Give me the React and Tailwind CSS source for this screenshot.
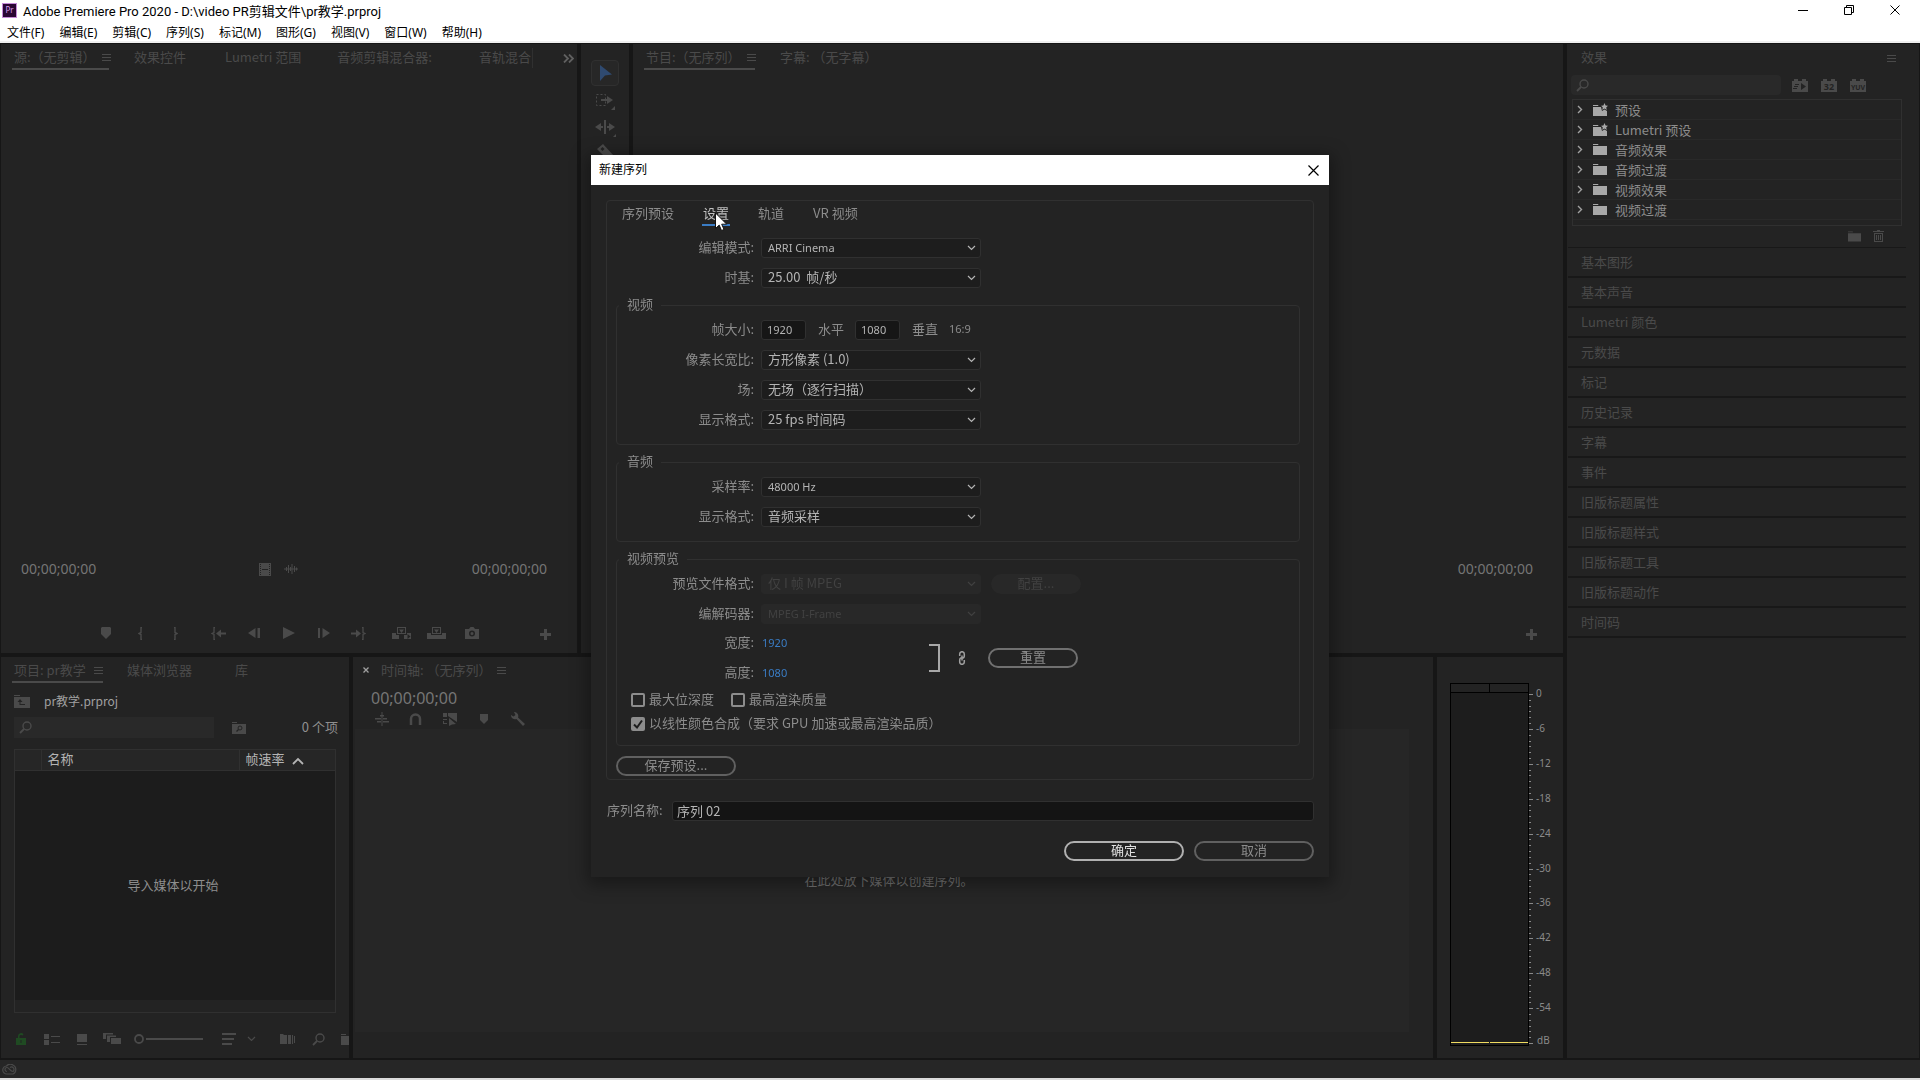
import React from "react";

const uiFont = 'font-["Noto_Sans_CJK_SC",sans-serif]';
const latinFont = 'font-["Noto_Sans","Noto_Sans_CJK_SC",sans-serif]';

function Icon({ w, h, label, className = "", children }) {
  return (
    <svg
      width={w}
      height={h}
      viewBox={`0 0 ${w} ${h}`}
      fill="currentColor"
      role={label ? "img" : undefined}
      aria-label={label}
      aria-hidden={label ? undefined : true}
      className={`shrink-0 ${className}`}
    >
      {children}
    </svg>
  );
}

const MenuLines = () => (
  <Icon w={9} h={9}>
    <path d="M0 1h9v1H0zM0 4h9v1H0zM0 7h9v1H0z" />
  </Icon>
);

const ChevronDown = () => (
  <Icon w={9} h={6}>
    <path d="M1 1l3.5 3.5L8 1" fill="none" stroke="currentColor" strokeWidth="1.2" />
  </Icon>
);

const Search = () => (
  <Icon w={13} h={13}>
    <circle cx="8" cy="5" r="4" fill="none" stroke="currentColor" strokeWidth="1.4" />
    <path d="M5 8L1 12" stroke="currentColor" strokeWidth="1.8" />
  </Icon>
);

const Plus = () => (
  <Icon w={11} h={11}>
    <path d="M4 0h3v4h4v3H7v4H4V7H0V4h4z" />
  </Icon>
);

const Marker = () => (
  <Icon w={10} h={12}>
    <path d="M1 0h8l1 1v6l-5 5-5-5V1z" />
  </Icon>
);

const MarkerSmall = () => (
  <Icon w={8} h={10}>
    <path d="M0 0h8v6l-4 4-4-4z" />
  </Icon>
);

const BraceOpen = () => (
  <Icon w={5} h={13}>
    <path d="M4 .5H3v5L1 6.500l2 1v5h1" fill="none" stroke="currentColor" strokeWidth="1.4" />
  </Icon>
);

const BraceClose = () => (
  <Icon w={5} h={13}>
    <path d="M1 .5h1v5l2 1-2 1v5H1" fill="none" stroke="currentColor" strokeWidth="1.4" />
  </Icon>
);

const GoIn = () => (
  <Icon w={15} h={13}>
    <path d="M4 .5H3v5L1 6.500l2 1v5h1" fill="none" stroke="currentColor" strokeWidth="1.3" />
    <path d="M5 6.500L10 2.500v3h5v2h-5v3z" />
  </Icon>
);

const GoOut = () => (
  <Icon w={15} h={13}>
    <path d="M11 .5h1v5l2 1-2 1v5h-1" fill="none" stroke="currentColor" strokeWidth="1.3" />
    <path d="M10 6.500L5 2.500v3H0v2h5v3z" />
  </Icon>
);

const StepBack = () => (
  <Icon w={12} h={10}>
    <path d="M0 5l7.500-5v10zM9.500 0H12v10H9.500z" />
  </Icon>
);

const StepForward = () => (
  <Icon w={12} h={10}>
    <path d="M12 5L4.500 0v10zM0 0h2v10H0z" />
  </Icon>
);

const Play = () => (
  <Icon w={12} h={12}>
    <path d="M0 0l12 6-12 6z" />
  </Icon>
);

const Insert = () => (
  <Icon w={20} h={13}>
    <path fillRule="evenodd" d="M5 0h9v7H5zM6 1v5h7V1z" />
    <path d="M7 2.500h5L9.500 6zM0 6h4v2h3v4H0zM12 8h3V6h4v6h-7z" />
    <path d="M15.500 7l3 2.500-3 2.500z" fill="#232323" />
  </Icon>
);

const Overwrite = () => (
  <Icon w={20} h={13}>
    <path fillRule="evenodd" d="M5 0h9v7H5zM6 1v5h7V1z" />
    <path d="M7 2.500h5L9.500 6zM0 6h4v2h11V6h4v6H0z" />
  </Icon>
);

const Camera = () => (
  <Icon w={14} h={12}>
    <path fillRule="evenodd" d="M0 2h4l1.500-2h3L10 2h4v10H0zM7 3.500a3 3 0 100 6 3 3 0 000-6zM7 5a1.500 1.500 0 110 3 1.500 1.500 0 010-3z" />
  </Icon>
);

const Folder = ({ w = 14 }) => (
  <svg width={w} height="11" viewBox="0 0 14 11" fill="currentColor" aria-hidden="true" className="shrink-0">
    <path d="M0 0h5l.5 1H0zM0 2h14v9H0z" />
  </svg>
);

const PresetFolder = () => (
  <Icon w={15} h={13}>
    <path d="M0 2h5l.5 1H0zM0 4h8l1 4 2.500-1.500L14 8v5H0z" />
    <path d="M11.500 0l1.100 2.500 2.400.2-1.800 1.700.6 2.600-2.300-1.400L9.200 7l.6-2.600L8 2.700l2.400-.2z" />
  </Icon>
);

const IconButton = ({ label, className = "", children }) => (
  <button type="button" aria-label={label} className={`flex shrink-0 items-center justify-center ${className}`}>
    {children}
  </button>
);

function PanelTab({ active, className = "", children }) {
  return (
    <button
      type="button"
      role="tab"
      aria-selected={!!active}
      className={`flex h-[22px] shrink-0 items-center whitespace-nowrap border-b-2 pb-0.5 pl-[2px] ${active ? "border-[#4a4a4a]" : "border-transparent"} ${className}`}
    >
      <span>{children}</span>
      {active && (
        <span className="ml-auto pl-1.5">
          <MenuLines />
        </span>
      )}
    </button>
  );
}

const transport = [
  [["标记", Marker], ["标记入点", BraceOpen], ["标记出点", BraceClose]],
  [["转到入点", GoIn], ["后退一帧", StepBack], ["播放", Play], ["前进一帧", StepForward], ["转到出点", GoOut]],
  [["插入", Insert], ["覆盖", Overwrite], ["导出帧", Camera]],
];

function Timecode() {
  return <span className={`${latinFont} text-[14px] text-[#757575]`}>00;00;00;00</span>;
}

function SourcePanel() {
  return (
    <section className="flex min-w-0 flex-[576] flex-col bg-[#232323]">
      <div className="flex h-[26px] items-end overflow-hidden pl-[11px]" role="tablist">
        <PanelTab active className="w-[97px]">源:（无剪辑）</PanelTab>
        <PanelTab className="ml-[23px]">效果控件</PanelTab>
        <PanelTab className="ml-[37px]">Lumetri 范围</PanelTab>
        <PanelTab className="ml-[34px]">音频剪辑混合器:</PanelTab>
        <PanelTab className="ml-[45px]">音轨混合</PanelTab>
        <span className="mb-0.5 ml-px h-5 border-l border-[#303030]" />
        <IconButton label="更多" className="ml-auto mr-[3px] h-[22px] pb-0.5 text-[#606060]">
          <Icon w={11} h={9}>
            <path d="M1 .5l4 4-4 4M6 .5l4 4-4 4" fill="none" stroke="currentColor" strokeWidth="1.800" />
          </Icon>
        </IconButton>
      </div>
      <div className="mt-auto flex h-5 items-center pl-5 pr-[30px]">
        <div className="flex-1"><Timecode /></div>
        <span className="mr-3 flex items-center gap-[13px]">
          <Icon w={12} h={13}>
            <path fillRule="evenodd" d="M0 0h12v13H0zM1 1v1h1V1zM1 3v1h1V3zM1 5v1h1V5zM1 7v1h1V7zM1 9v1h1V9zM1 11v1h1v-1zM10 1v1h1V1zM10 3v1h1V3zM10 5v1h1V5zM10 7v1h1V7zM10 9v1h1V9zM10 11v1h1v-1zM3 6v1h6V6z" />
          </Icon>
          <Icon w={14} h={10}>
            <path d="M0 4.500h14v1H0zM2 3h1v4H2zM4 1h1v8H4zM6 3h1v4H6zM7.500 0h1v10h-1zM10 2h1v6h-1zM12 3.500h1v3h-1z" />
          </Icon>
        </span>
        <div className="flex-1 text-right"><Timecode /></div>
      </div>
      <div className="mb-2.5 mt-[44px] flex h-5 items-center pl-[87px] pr-[26px]">
        {transport.map((group, i) => (
          <div key={i} className="mr-2 flex">
            {group.map(([label, Glyph]) => (
              <IconButton key={label} label={label} className="h-5 w-[35px]">
                <Glyph />
              </IconButton>
            ))}
          </div>
        ))}
        <IconButton label="按钮编辑器" className="ml-auto mt-[3px]">
          <Plus />
        </IconButton>
      </div>
    </section>
  );
}

function ToolPanel() {
  const corner = <path d="M22 17v4h-4z" />;
  return (
    <section className="flex w-12 shrink-0 flex-col items-center bg-[#232323] pt-4">
      <IconButton label="选择工具" className="h-[26px] w-7 rounded-sm border border-[#303030] bg-[#272727] text-[#2f4a70]">
        <Icon w={12} h={16} className="ml-0.5">
          <path d="M0 0l12 9.500-7 1L0 16z" />
        </Icon>
      </IconButton>
      <IconButton label="向前选择轨道工具" className="h-[27px] w-7">
        <Icon w={24} h={22}>
          <path d="M3.500 5.500h9v11h-9z" fill="none" stroke="currentColor" strokeDasharray="2 2" />
          <path d="M8 10h6V7l6 4-6 4v-3H8z" />
          {corner}
        </Icon>
      </IconButton>
      <IconButton label="波纹编辑工具" className="h-[27px] w-7">
        <Icon w={24} h={22}>
          <path d="M11 4h2v14h-2zM2 11l6-4v3h2v2H8v3zM22 11l-6-4v3h-2v2h2v3z" />
          <path d="M23 18v3h-3z" />
        </Icon>
      </IconButton>
      <IconButton label="剃刀工具" className="h-[27px] w-7">
        <Icon w={24} h={22}>
          <path fillRule="evenodd" d="M4 6l6-5 11 12-5 5zM9.500 4L7.500 6l2 2 2-2z" />
        </Icon>
      </IconButton>
    </section>
  );
}

function ProgramPanel() {
  return (
    <section className="flex min-w-0 flex-[930] flex-col bg-[#232323]">
      <div className="flex h-[26px] items-end pl-[11px]" role="tablist">
        <PanelTab active className="w-[111px]">节目:（无序列）</PanelTab>
        <PanelTab className="ml-[23px]">字幕: （无字幕）</PanelTab>
      </div>
      <div className="mt-auto flex h-5 items-center justify-end pr-[30px]">
        <Timecode />
      </div>
      <div className="mb-2.5 mt-[44px] flex h-5 items-center justify-end pr-[26px]">
        <IconButton label="按钮编辑器" className="mt-[3px]">
          <Plus />
        </IconButton>
      </div>
    </section>
  );
}

function ProjectPanel() {
  return (
    <section className="flex min-w-0 flex-[348] flex-col overflow-hidden bg-[#232323]">
      <div className="flex h-[26px] shrink-0 items-end overflow-hidden pl-[11px]" role="tablist">
        <PanelTab active className="w-[91px]">项目: pr教学</PanelTab>
        <PanelTab className="ml-[22px]">媒体浏览器</PanelTab>
        <PanelTab className="ml-[41px]">库</PanelTab>
      </div>
      <div className="mt-2 flex h-5 shrink-0 items-center pl-[13px]">
        <Icon w={16} h={13}>
          <path fillRule="evenodd" d="M0 0h6v1H0zM0 2h16v11H0zM6 4L3.500 7H5.500v3H11V9H6.500V7H8.500z" />
        </Icon>
        <span className="ml-3.5 text-[12px] text-[#a0a0a0]">pr教学.prproj</span>
      </div>
      <div className="mt-1.5 flex h-[21px] shrink-0 items-center pl-[13px] pr-[11px]">
        <label className="flex h-full w-[200px] items-center bg-[#292929] pl-[5px]">
          <Search />
          <input aria-label="搜索项目" className="ml-1 w-full bg-transparent outline-none" />
        </label>
        <IconButton label="搜索素材箱" className="ml-[18px]">
          <Icon w={14} h={12}>
            <path d="M0 0h5v1H0zM0 2h14v10H0z" />
            <circle cx="8" cy="6" r="2" fill="none" stroke="#232323" />
            <path d="M6.500 7.500L4.500 9.500" stroke="#232323" strokeWidth="1.300" />
          </Icon>
        </IconButton>
        <span className="ml-auto whitespace-nowrap pb-0.5 text-[#909090]">0 个项</span>
      </div>
      <div className="ml-[13px] mr-[13px] mt-[11px] flex min-h-0 flex-1 flex-col border border-[#303030] bg-[#1c1c1c]">
        <table className="w-full shrink-0 table-fixed border-collapse bg-[#262626] text-left text-[#b4b4b4]">
          <thead>
            <tr className="h-5 border-b border-[#303030]">
              <th className="w-[26px] p-0" aria-label="标签" />
              <th className="border-l border-[#303030] p-0 pb-0.5 pl-1.5 font-normal leading-none">名称</th>
              <th className="w-24 border-l border-[#303030] p-0 pb-0.5 pl-1.5 font-normal leading-none">
                <span className="flex items-center gap-[7px]">
                  帧速率
                  <Icon w={12} h={8} className="mt-1">
                    <path d="M1 7l5-5 5 5" fill="none" stroke="currentColor" strokeWidth="1.800" />
                  </Icon>
                </span>
              </th>
            </tr>
          </thead>
        </table>
        <div className="flex flex-1 items-center justify-center pr-1 text-[#8e8e8e]">导入媒体以开始</div>
        <div className="h-3 bg-[#232323]" />
      </div>
      <div className="flex h-[45px] shrink-0 items-center overflow-hidden pl-[15px] pt-[7px]">
        <Icon w={10} h={12} label="可写" className="text-[#1f4a22]">
          <path fillRule="evenodd" d="M2 5V3a3 3 0 015.500-1.500L6.500 2.500A1.800 1.800 0 003.500 3v2H10v7H0V5zM4.500 7v3h1V7z" />
        </Icon>
        <IconButton label="列表视图" className="ml-[18px]">
          <Icon w={16} h={11}>
            <path d="M0 0h5v5H0zM0 6h5v5H0zM7 2h9v1H7zM7 8h9v1H7z" />
          </Icon>
        </IconButton>
        <IconButton label="图标视图" className="ml-[17px]">
          <Icon w={10} h={11}>
            <path d="M0 0h10v8H0zM0 10h10v1H0z" />
          </Icon>
        </IconButton>
        <IconButton label="自由变换视图" className="ml-4">
          <Icon w={18} h={12}>
            <path d="M0 0h10v1.500H3V6H0zM4 2.500h9V4H7v5H4zM8 5h10v6H8z" />
          </Icon>
        </IconButton>
        <span className="ml-[13px] flex items-center">
          <Icon w={69} h={10}>
            <circle cx="5" cy="5" r="4" fill="none" stroke="currentColor" strokeWidth="1.800" />
            <path d="M12 4h57v2H12z" />
          </Icon>
        </span>
        <IconButton label="排序图标" className="ml-[19px]">
          <Icon w={14} h={12}>
            <path d="M0 0h14v2H0zM0 5h12v2H0zM0 10h10v2H0z" />
          </Icon>
          <span className="ml-[11px]"><ChevronDown /></span>
        </IconButton>
        <IconButton label="自动匹配序列" className="ml-6">
          <Icon w={15} h={10}>
            <path d="M0 0h3l1 1h3v9H0zM8 1h3v9H8zM12 1h1v9h-1zM14 2h1v7h-1z" />
          </Icon>
        </IconButton>
        <IconButton label="查找" className="ml-[17px]">
          <Search />
        </IconButton>
        <IconButton label="新建素材箱" className="ml-4">
          <Icon w={12} h={11}>
            <path d="M0 0h5v1H0zM0 2h12v9H0z" />
          </Icon>
        </IconButton>
      </div>
    </section>
  );
}

function TimelinePanel() {
  return (
    <section className="flex min-w-0 flex-[1080] flex-col bg-[#232323]">
      <div className="flex h-[26px] shrink-0 items-end pl-2.5">
        <div className="flex h-[22px] items-center pb-1">
          <button type="button" aria-label="关闭时间轴" className="text-[#a0a0a0]">
            <Icon w={6} h={6}>
              <path d="M.5.5l5 5M5.500.5l-5 5" stroke="currentColor" strokeWidth="1.300" />
            </Icon>
          </button>
          <span className="ml-3 whitespace-nowrap">时间轴: （无序列）</span>
          <span className="ml-[5px]"><MenuLines /></span>
        </div>
      </div>
      <div className={`${latinFont} mt-[3px] h-6 shrink-0 pl-[18px] text-[16px] leading-6 text-[#757575]`}>00;00;00;00</div>
      <div className="flex h-[18px] shrink-0 items-center pl-[22px]">
        <IconButton label="嵌套">
          <Icon w={14} h={14}>
            <path d="M6.500 0h1v14h-1zM5 3h4v1.500H5zM0 6h6v1.500H0zM8 6h4v1.500H8zM2 9h4v1.500H2zM8 9h6v1.500H8z" />
          </Icon>
        </IconButton>
        <IconButton label="对齐" className="ml-5">
          <Icon w={13} h={12}>
            <path d="M2 12V6a4.500 4.500 0 019 0v6" fill="none" stroke="currentColor" strokeWidth="2.500" />
          </Icon>
        </IconButton>
        <IconButton label="链接选择项" className="ml-[21px]">
          <Icon w={15} h={14}>
            <path d="M0 1h4v4H0zM5 1h9v9L5 4zM0 7h4v1H0zM0 9h1v3H0zM1 11h3v1H1zM6 6l7 6-4 .5L6 14z" />
          </Icon>
        </IconButton>
        <IconButton label="添加标记" className="ml-[22px]">
          <MarkerSmall />
        </IconButton>
        <IconButton label="时间轴显示设置" className="ml-[23px]">
          <Icon w={14} h={14}>
            <path d="M3 0a4 4 0 014 5.500L14 12l-2 2-6.500-7A4 4 0 010 3l2.500 1.500L4.500 3z" />
          </Icon>
        </IconButton>
      </div>
      <div className="mb-[26px] ml-0.5 mr-6 mt-px flex flex-1 items-center justify-center bg-[#262626] pb-0.5 text-[#707070]">
        <span className="ml-3.5">在此处放下媒体以创建序列。</span>
      </div>
    </section>
  );
}

const meterLabels = ["0", "-6", "-12", "-18", "-24", "-30", "-36", "-42", "-48", "-54"];

function MeterPanel() {
  return (
    <section className={`${latinFont} flex w-[126px] shrink-0 bg-[#232323] pb-3 pl-[13px] pt-[26px] text-[10px] text-[#8a8a8a]`}>
      <div className="flex w-[79px] flex-col border border-black bg-[#1d1d1d]">
        <div className="flex h-[9px] shrink-0 border-b border-black bg-[#232323]">
          <span className="w-[39px] border-r border-black" />
        </div>
        <div className="mt-auto flex gap-px pb-0.5">
          <span className="h-px flex-1 bg-[#f0dc60]" />
          <span className="h-px flex-1 bg-[#f0dc60]" />
        </div>
      </div>
      <div className="flex flex-col pb-0.5 pt-[11px]">
        {meterLabels.map((label) => (
          <div key={label} className="flex min-h-0 flex-1">
            <div className="flex w-[7px] flex-col">
              <span className="w-1 flex-1 border-t border-[#8a8a8a]" />
              {[1, 2, 3, 4, 5].map((n) => (
                <span key={n} className="w-0.5 flex-1 border-t border-[#8a8a8a]" />
              ))}
            </div>
            <span className="-mt-[7px] leading-3">{label}</span>
          </div>
        ))}
        <div className="flex h-px">
          <span className="w-1 border-t border-[#8a8a8a]" />
          <span className="-mt-[9px] ml-1 leading-3">dB</span>
        </div>
      </div>
    </section>
  );
}

const effectFolders = ["预设", "Lumetri 预设", "音频效果", "音频过渡", "视频效果", "视频过渡"];
const collapsedPanels = ["基本图形", "基本声音", "Lumetri 颜色", "元数据", "标记", "历史记录", "字幕", "事件", "旧版标题属性", "旧版标题样式", "旧版标题工具", "旧版标题动作", "时间码"];

function Badge({ label, children }) {
  return (
    <IconButton label={label}>
      <Icon w={16} h={13}>
        <path d="M0 2h2V0h4v2h4V0h4v2h2v11H0z" />
        {children}
      </Icon>
    </IconButton>
  );
}

function EffectsPanel() {
  return (
    <aside className="flex w-[352px] shrink-0 flex-col bg-[#232323]">
      <div className="flex h-[26px] shrink-0 items-center justify-between pl-[14px] pr-[23px]">
        <span>效果</span>
        <IconButton label="面板菜单" className="mt-0.5"><MenuLines /></IconButton>
      </div>
      <div className="mt-[5px] flex h-5 shrink-0 items-center pl-1">
        <label className="flex h-full w-[210px] items-center rounded-sm bg-[#292929] pl-[5px]">
          <Search />
          <input aria-label="搜索效果" className="ml-1 w-full bg-transparent outline-none" />
        </label>
        <span className="ml-[11px] flex gap-[13px]">
          <Badge label="加速效果">
            <path d="M9 4l5 3.500-5 3.500zM3 5h4v1H3zM2 7h4v1H2zM1 9h4v1H1z" fill="#232323" />
          </Badge>
          <Badge label="32 位颜色">
            <text x="8" y="11" textAnchor="middle" fontSize="9" fontWeight="700" fontFamily="Noto Sans" fill="#232323">32</text>
          </Badge>
          <Badge label="YUV 效果">
            <text x="8" y="11" textAnchor="middle" fontSize="7" fontWeight="700" fontFamily="Noto Sans" fill="#232323">YUV</text>
          </Badge>
        </span>
      </div>
      <ul className="ml-[5px] mr-[17px] mt-1 shrink-0 border border-[#303030] pb-[5px] text-[#8c8c8c]">
        {effectFolders.map((name, i) => (
          <li key={name} className="flex h-5 items-center border-b border-[#292929] pl-1">
            <Icon w={6} h={9}>
              <path d="M1 1l3.500 3.500L1 8" fill="none" stroke="#a0a0a0" strokeWidth="1.400" />
            </Icon>
            <span className="ml-2.5 flex w-[15px] items-end text-[#a8a8a8]">
              {i < 2 ? <PresetFolder /> : <Folder />}
            </span>
            <span className="ml-[7px]">{name}</span>
          </li>
        ))}
      </ul>
      <div className="flex h-5 shrink-0 items-center justify-end gap-3 pr-[35px]">
        <IconButton label="新建自定义素材箱"><Folder w={13} /></IconButton>
        <IconButton label="删除">
          <Icon w={11} h={12}>
            <path fillRule="evenodd" d="M4 0h3v1h4v1H0V1h4zM1 3h9v9H1zM2 4v7h7V4zM3 5h1v5H3zM5 5h1v5H5zM7 5h1v5H7z" />
          </Icon>
        </IconButton>
      </div>
      <div className="ml-px mr-[13px] mt-px border-t border-[#181818]">
        {collapsedPanels.map((name) => (
          <button key={name} type="button" className="flex h-[30px] w-full items-center border-b-2 border-[#181818] pl-[13px] text-left">
            {name}
          </button>
        ))}
      </div>
    </aside>
  );
}

function Select({ id, value, disabled, small }) {
  return (
    <span className={`relative flex h-5 w-[220px] items-center ${disabled ? "text-[#414141]" : "text-[#b4b4b4]"}`}>
      <select
        id={id}
        disabled={disabled}
        className={`h-5 w-full appearance-none rounded-[3px] border pl-1.5 pr-5 opacity-100 outline-none ${small ? `${latinFont} text-[11px] leading-[18px]` : "pb-0.5 text-[13px] leading-4"} ${disabled ? "border-[#282828] bg-[#282828]" : "border-[#303030] bg-[#1d1d1d]"}`}
      >
        <option>{value}</option>
      </select>
      <span className="pointer-events-none absolute right-[5px]">
        <ChevronDown />
      </span>
    </span>
  );
}

function Row({ id, label, wide, children }) {
  return (
    <div className="flex h-5 items-center">
      <label htmlFor={id} className={`mr-[7px] shrink-0 pb-0.5 text-right ${wide ? "w-[147px]" : "w-[137px]"}`}>
        {label}
      </label>
      {children}
    </div>
  );
}

function Group({ title, children }) {
  return (
    <fieldset className="ml-[9px] mr-[13px] mt-[7px] min-w-0 rounded-sm border border-[#303030] pb-3.5">
      <legend className="ml-0.5 h-5 px-2 leading-[18px]">{title}</legend>
      <div className="flex flex-col gap-2.5 pt-[5px]">{children}</div>
    </fieldset>
  );
}

function Pill({ className = "", disabled, children }) {
  return (
    <button type="button" disabled={disabled} className={`flex h-5 shrink-0 items-center justify-center rounded-full pb-[3px] leading-none ${className}`}>
      {children}
    </button>
  );
}

function Check({ id, label, checked }) {
  return (
    <span className="flex h-3.5 items-center">
      <span className="relative flex">
        <input
          id={id}
          type="checkbox"
          defaultChecked={checked}
          className="peer size-3.5 appearance-none rounded-[2px] border-2 border-[#8c8c8c] checked:bg-[#8c8c8c]"
        />
        <svg viewBox="0 0 14 14" className="pointer-events-none absolute inset-0 hidden size-3.5 peer-checked:block" aria-hidden="true">
          <path d="M3 7.500l3 3 5-7" fill="none" stroke="#1c1c1c" strokeWidth="2" />
        </svg>
      </span>
      <label htmlFor={id} className="ml-1 whitespace-nowrap pb-[3px] leading-none">{label}</label>
    </span>
  );
}

function DialogTab({ active, children }) {
  return (
    <button
      type="button"
      role="tab"
      aria-selected={!!active}
      className={`relative h-[22px] border-b-2 px-px pb-0.5 leading-[18px] ${active ? "border-[#3a7cc4] text-[#c0c0c0]" : "border-transparent"}`}
    >
      {children}
    </button>
  );
}

function Cursor() {
  return (
    <svg width="13" height="20" viewBox="0 0 13 20" aria-hidden="true" className="pointer-events-none absolute left-[13px] top-[8px]">
      <path d="M.5 1v15.500l3.700-3.400 2.300 5.400 2.500-1-2.300-5.300h5z" fill="#fff" stroke="#111" />
    </svg>
  );
}

function NewSequenceDialog() {
  return (
    <div role="dialog" aria-label="新建序列" className="w-[738px] max-w-full bg-[#232323] text-[#8c8c8c] shadow-[0_4px_16px_4px_rgba(0,0,0,0.35)]">
      <header className="flex h-[30px] items-center justify-between bg-white pl-2 pr-2.5 text-[12px] text-black">
        <h1 className="pb-0.5">新建序列</h1>
        <button type="button" aria-label="关闭">
          <Icon w={11} h={11}>
            <path d="M.5.5l10 10M10.500.5l-10 10" stroke="currentColor" strokeWidth="1.200" />
          </Icon>
        </button>
      </header>
      <form className="px-[15px] pb-4 pt-[15px]" onSubmit={(e) => e.preventDefault()}>
        <div className="rounded-sm border border-[#303030] pb-[3px]">
          <div role="tablist" className="flex gap-[27px] pl-3.5 pt-[3px]">
            <DialogTab>序列预设</DialogTab>
            <DialogTab active>
              设置
              <Cursor />
            </DialogTab>
            <DialogTab>轨道</DialogTab>
            <DialogTab>VR 视频</DialogTab>
          </div>
          <div className="mt-3 flex flex-col gap-2.5">
            <Row wide id="mode" label="编辑模式:"><Select id="mode" value="ARRI Cinema" small /></Row>
            <Row wide id="timebase" label="时基:"><Select id="timebase" value={"25.00\u00a0\u00a0帧/秒"} /></Row>
          </div>

          <Group title="视频">
            <Row id="frame-w" label="帧大小:">
              <input id="frame-w" defaultValue="1920" className={`${latinFont} h-5 w-[45px] rounded-[3px] border border-[#303030] bg-[#161616] pl-[5px] text-[11px] text-[#b4b4b4] outline-none`} />
              <label htmlFor="frame-w" className="ml-3 pb-0.5">水平</label>
              <input id="frame-h" defaultValue="1080" className={`${latinFont} ml-[11px] h-5 w-[45px] rounded-[3px] border border-[#303030] bg-[#161616] pl-[5px] text-[11px] text-[#b4b4b4] outline-none`} />
              <label htmlFor="frame-h" className="ml-3 pb-0.5">垂直</label>
              <span className={`${latinFont} ml-[11px] pb-0.5 text-[11px]`}>16:9</span>
            </Row>
            <Row id="par" label="像素长宽比:"><Select id="par" value="方形像素 (1.0)" /></Row>
            <Row id="fields" label="场:"><Select id="fields" value="无场（逐行扫描）" /></Row>
            <Row id="vfmt" label="显示格式:"><Select id="vfmt" value="25 fps 时间码" /></Row>
          </Group>

          <Group title="音频">
            <Row id="rate" label="采样率:"><Select id="rate" value="48000 Hz" small /></Row>
            <Row id="afmt" label="显示格式:"><Select id="afmt" value="音频采样" /></Row>
          </Group>

          <Group title="视频预览">
            <Row id="pfmt" label="预览文件格式:">
              <Select id="pfmt" value="仅 I 帧 MPEG" disabled />
              <Pill disabled className="ml-2.5 w-[90px] bg-[#282828] text-[#414141]">配置...</Pill>
            </Row>
            <Row id="codec" label="编解码器:"><Select id="codec" value="MPEG I-Frame" disabled small /></Row>
            <div className="-mt-px flex items-center">
              <div className="flex w-[312px] flex-col gap-2.5">
                <Row id="pw" label="宽度:">
                  <button id="pw" type="button" className={`${latinFont} ml-px text-[11px] text-[#3a7cc4]`}>1920</button>
                </Row>
                <Row id="ph" label="高度:">
                  <button id="ph" type="button" className={`${latinFont} ml-px text-[11px] text-[#3a7cc4]`}>1080</button>
                </Row>
              </div>
              <span className="h-7 w-[11px] border-y-2 border-r-2 border-[#a8a8a8]" />
              <Icon w={8} h={14} className="ml-[18px] text-[#a0a0a0]">
                <path d="M1.700 5V3a2.300 2.300 0 014.600 0v2a2.300 2.300 0 01-2.300 2.200M6.300 9v2a2.300 2.300 0 01-4.600 0V9A2.300 2.300 0 014 6.800M4 4.500v5" fill="none" stroke="currentColor" strokeWidth="1.500" />
              </Icon>
              <Pill className="ml-[22px] w-[90px] border-2 border-[#707070]">重置</Pill>
            </div>
            <div className="flex flex-col gap-2.5 pl-3.5">
              <div className="flex gap-[17px]">
                <Check id="depth" label="最大位深度" />
                <Check id="quality" label="最高渲染质量" />
              </div>
              <Check id="linear" label="以线性颜色合成（要求 GPU 加速或最高渲染品质）" checked />
            </div>
          </Group>
          <Pill className="ml-[9px] mt-2.5 w-[120px] border-2 border-[#606060]">保存预设...</Pill>
        </div>
        <div className="mt-[21px] flex h-5 items-center">
          <label htmlFor="seq-name" className="w-[66px] shrink-0 pb-0.5 pl-px">序列名称:</label>
          <input id="seq-name" defaultValue="序列 02" className="h-5 min-w-0 flex-1 rounded-[3px] border border-[#303030] bg-[#141414] pb-0.5 pl-1 leading-4 text-[#b4b4b4] outline-none" />
        </div>
        <div className="mt-5 flex justify-end gap-2.5">
          <Pill className="w-[120px] border-2 border-[#b0b0b0] text-[#e0e0e0]">确定</Pill>
          <Pill className="w-[120px] border-2 border-[#606060]">取消</Pill>
        </div>
      </form>
    </div>
  );
}

const menus = ["文件(F)", "编辑(E)", "剪辑(C)", "序列(S)", "标记(M)", "图形(G)", "视图(V)", "窗口(W)", "帮助(H)"];

export default function App() {
  return (
    <div className={`${uiFont} flex h-screen flex-col overflow-hidden bg-[#161616] text-[13px] leading-5 text-[#4a4a4a]`}>
      <header className={`${latinFont} shrink-0 border-b-2 border-[#f0f0f0] bg-white text-[12px] text-black`}>
        <div className="flex h-6 items-center pl-0.5">
          <span className="mb-1 flex size-[15px] items-center justify-center border border-[#c58ad8] bg-[#2a0634] text-[8px] text-[#d9a0ee]">Pr</span>
          <span className='ml-1.5 font-["Roboto","Noto_Sans_CJK_SC",sans-serif] text-[13px]'>Adobe Premiere Pro 2020 - D:\video PR剪辑文件\pr教学.prproj</span>
          <div className="mb-1 ml-auto flex pr-0.5">
            <IconButton label="最小化" className="h-5 w-[46px]">
              <Icon w={10} h={10}><path d="M0 5h10v1H0z" /></Icon>
            </IconButton>
            <IconButton label="还原" className="h-5 w-[46px]">
              <Icon w={10} h={10}>
                <path d="M.5 2.500h7v7h-7zM2.500 2V.5h7v7H8" fill="none" stroke="currentColor" />
              </Icon>
            </IconButton>
            <IconButton label="关闭" className="h-5 w-[46px]">
              <Icon w={10} h={10}><path d="M.5.5l9 9M9.500.5l-9 9" stroke="currentColor" /></Icon>
            </IconButton>
          </div>
        </div>
        <nav className="flex h-[17px] items-center gap-[15px] pl-[7px]">
          {menus.map((m) => (
            <button key={m} type="button" className="leading-4">{m}</button>
          ))}
        </nav>
      </header>

      <main className="flex min-h-0 flex-1 gap-1 px-px pt-px">
        <div className="flex min-w-0 flex-1 flex-col gap-1">
          <div className="flex min-h-0 flex-[609] gap-1">
            <SourcePanel />
            <ToolPanel />
            <ProgramPanel />
          </div>
          <div className="flex min-h-0 flex-[401] gap-1">
            <ProjectPanel />
            <TimelinePanel />
            <MeterPanel />
          </div>
        </div>
        <EffectsPanel />
      </main>

      <footer className="mt-0.5 flex h-5 shrink-0 items-center border-b-2 border-[#dcdcdc] bg-[#262626] pl-0.5">
        <Icon w={16} h={11}>
          <path d="M5 10a4 4 0 01-.5-8A5 5 0 0111 1a5 5 0 010 9zM5 7.500a2 2 0 110-4c2 0 3 4 6 4a2.500 2.500 0 10-3-4" fill="none" stroke="currentColor" strokeWidth="1.200" />
        </Icon>
      </footer>

      <div className="fixed inset-0 flex items-start justify-center pt-[155px]">
        <NewSequenceDialog />
      </div>
    </div>
  );
}
